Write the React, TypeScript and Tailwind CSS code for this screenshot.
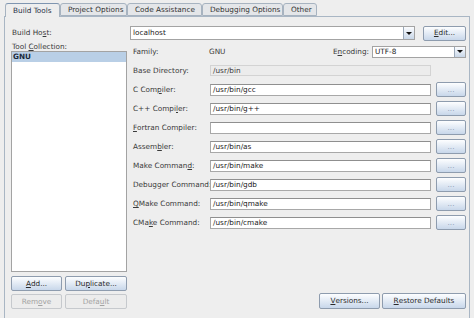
import React from 'react';

const U: React.FC<{ children: React.ReactNode }> = ({ children }) => (
  <span className="underline underline-offset-[1px]">{children}</span>
);

const tabs = [
  { name: 'Build Tools', width: 'w-[55px]', active: true },
  { name: 'Project Options', width: 'w-[67px]', active: false },
  { name: 'Code Assistance', width: 'w-[75px]', active: false },
  { name: 'Debugging Options', width: 'w-[81px]', active: false },
  { name: 'Other', width: 'w-[34px]', active: false },
];

const btn =
  'flex items-center justify-center border border-[#8e9cae] rounded-[2px] bg-linear-to-b from-[#fdfeff] to-[#c8d7ea] text-[#2b2b2b]';
const btnOff =
  'flex items-center justify-center border border-[#c6c9cd] rounded-[2px] bg-[#ececec] text-[#a3a3a3]';

const Arrow: React.FC = () => (
  <div className="w-[11px] h-full flex items-center justify-center border-l border-[#9aa8b8] bg-linear-to-b from-[#fbfcfe] to-[#c9d7e8]">
    <div className="w-0 h-0 border-l-[3px] border-r-[3px] border-t-[3px] border-l-transparent border-r-transparent border-t-[#111]" />
  </div>
);

const rows: { label: React.ReactNode; value: string }[] = [
  { label: <>C Com<U>p</U>iler:</>, value: '/usr/bin/gcc' },
  { label: <>C++ Compi<U>l</U>er:</>, value: '/usr/bin/g++' },
  { label: <><U>F</U>ortran Compiler:</>, value: '' },
  { label: <>Assem<U>b</U>ler:</>, value: '/usr/bin/as' },
  { label: <>Make Comman<U>d</U>:</>, value: '/usr/bin/make' },
  { label: <>Debugger Command:</>, value: '/usr/bin/gdb' },
  { label: <><U>Q</U>Make Command:</>, value: '/usr/bin/qmake' },
  { label: <>CMa<U>k</U>e Command:</>, value: '/usr/bin/cmake' },
];

const App: React.FC = () => {
  return (
    <div className="w-[474px] h-[318px] bg-[#eeeeee] font-['DejaVu_Sans',sans-serif] text-[7.3px] text-[#3a3a3a] overflow-hidden leading-none">
      {/* tab strip */}
      <div className="flex items-end h-[16px] pl-[5px] relative z-10">
        {tabs.map((t) => (
          <div
            key={t.name}
            className={`${t.width} flex items-center pl-[7px] rounded-t-[3px] border border-[#a7b3c0] ${
              t.active
                ? 'h-[14px] -mb-px border-b-0 bg-[#eeeeee] text-[#1f2f45] border-t-[#7f95b0]'
                : 'h-[13px] bg-[#e4e6e9] text-[#333]'
            }`}
          >
            {t.name}
          </div>
        ))}
      </div>

      {/* panel */}
      <div className="ml-[4px] w-[466px] h-[302px] border border-b-0 border-[#a9b6c4] flex">
        {/* left column */}
        <div className="w-[116px] ml-[6px] flex flex-col pt-[7px] pb-[9px]">
          <div className="h-[18px] flex items-center pl-[1px]">
            Build Ho<U>s</U>t:
          </div>
          <div className="h-[9px] flex items-center pl-[1px] whitespace-pre">
            {'Tool '}<U>C</U>ollection:
          </div>
          <div className="flex-1 border border-[#a3a3a3] bg-white">
            <div className="h-[10px] flex items-center pl-[1px] bg-[#b9cfe6] font-bold text-[#1c2a3c]">GNU</div>
          </div>
          <div className="mt-[4px] flex gap-[3px] h-[15px]">
            <div className={`${btn} w-[51px]`}>
              <U>A</U>dd...
            </div>
            <div className={`${btn} flex-1`}>
              Du<U>p</U>licate...
            </div>
          </div>
          <div className="mt-[3px] flex gap-[3px] h-[15px]">
            <div className={`${btnOff} w-[51px]`}>
              Rem<U>o</U>ve
            </div>
            <div className={`${btnOff} flex-1`}>
              Defa<U>u</U>lt
            </div>
          </div>
        </div>

        {/* right column */}
        <div className="w-[336px] ml-[3px] flex flex-col pt-[7px] pb-[9px]">
          <div className="h-[18px] flex items-center">
            <div className="w-[285px] h-[14px] flex border border-[#a3a3a3] bg-white text-[#222]">
              <div className="flex-1 flex items-center pl-[2px]">localhost</div>
              <Arrow />
            </div>
            <div className={`${btn} ml-[8px] w-[43px] h-[15px]`}>
              <U>E</U>dit...
            </div>
          </div>

          <div className="h-[19px] flex items-center">
            <div className="w-[79px] pl-[3px]">Family:</div>
            <div>GNU</div>
            <div className="ml-auto mr-[3px]">
              E<U>n</U>coding:
            </div>
            <div className="w-[94px] h-[12px] flex border border-[#a3a3a3] bg-white text-[#222]">
              <div className="flex-1 flex items-center pl-[2px]">UTF-8</div>
              <Arrow />
            </div>
          </div>

          <div className="h-[19px] flex items-center">
            <div className="w-[80px] pl-[3px]">Base Directory:</div>
            <div className="w-[221px] h-[11px] flex items-center pl-[2px] border border-[#d3d3d3] bg-[#ececec]">
              /usr/bin
            </div>
          </div>

          {rows.map((r, i) => (
            <div key={i} className="h-[19px] flex items-center">
              <div className="w-[80px] pl-[3px] whitespace-nowrap">{r.label}</div>
              <div className="w-[221px] h-[12px] flex items-center pl-[2px] border border-[#a8a8a8] border-t-[#8f8f8f] bg-white text-[#222]">
                {r.value}
              </div>
              <div className={`${btn} ml-[5px] w-[30px] h-[15px] text-[#8a9bb3]`}>...</div>
            </div>
          ))}

          <div className="mt-auto flex justify-end gap-[2px]">
            <div className={`${btn} w-[61px] h-[16px]`}>
              <U>V</U>ersions...
            </div>
            <div className={`${btn} w-[84px] h-[16px]`}>
              <U>R</U>estore Defaults
            </div>
          </div>
        </div>
      </div>
    </div>
  );
};

export default App;
